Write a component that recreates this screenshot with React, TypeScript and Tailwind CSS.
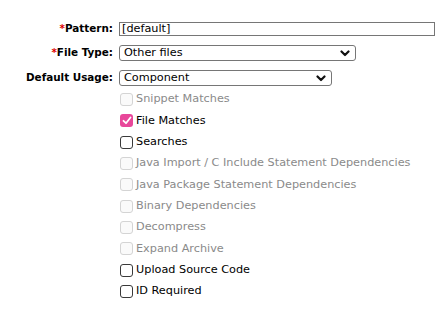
import { ReactNode } from "react";

type Opt = { label: string; checked?: boolean; disabled?: boolean };

const options: Opt[] = [
  { label: "Snippet Matches", disabled: true },
  { label: "File Matches", checked: true },
  { label: "Searches" },
  { label: "Java Import / C Include Statement Dependencies", disabled: true },
  { label: "Java Package Statement Dependencies", disabled: true },
  { label: "Binary Dependencies", disabled: true },
  { label: "Decompress", disabled: true },
  { label: "Expand Archive", disabled: true },
  { label: "Upload Source Code" },
  { label: "ID Required" },
];

const Chevron = () => (
  <svg width="10" height="7" viewBox="0 0 10 7" className="shrink-0">
    <path d="M1.5 1.5 L5 5 L8.5 1.5" fill="none" stroke="#111" strokeWidth="2.2" strokeLinecap="round" strokeLinejoin="round" />
  </svg>
);

const Label = ({ children, required }: { children: ReactNode; required?: boolean }) => (
  <div className="w-[113px] shrink-0 text-right text-[10.4px] font-bold text-black">
    {required && <span className="text-[#e00000]">*</span>}
    {children}
  </div>
);

const Select = ({ value, width }: { value: string; width: string }) => (
  <div className={`${width} flex h-[16px] items-center justify-between rounded-[3px] border border-[#767676] bg-white pl-[4px] pr-[5px]`}>
    <span className="leading-none">{value}</span>
    <Chevron />
  </div>
);

const Box = ({ checked, disabled }: { checked?: boolean; disabled?: boolean }) => {
  if (checked) {
    return (
      <span className="flex h-[13px] w-[13px] items-center justify-center rounded-[3px] bg-[#e8479a]">
        <svg width="10" height="9" viewBox="0 0 10 9">
          <path d="M1.5 4.8 L4 7.2 L8.5 1.5" fill="none" stroke="#fff" strokeWidth="1.8" strokeLinecap="round" strokeLinejoin="round" />
        </svg>
      </span>
    );
  }
  return (
    <span
      className={
        disabled
          ? "h-[13px] w-[13px] rounded-[3px] border border-[#d4d4d4] bg-[#fafafa]"
          : "h-[13px] w-[13px] rounded-[3px] border border-[#3a3a3a] bg-white"
      }
    />
  );
};

export default function App() {
  return (
    <div className="h-[310px] w-[436px] overflow-hidden bg-white pt-[21px] text-[11.25px] text-black" style={{ fontFamily: '"DejaVu Sans", Verdana, sans-serif' }}>
      <div className="flex h-[15px] items-center gap-[6px]">
        <Label required>Pattern:</Label>
        <div className="flex h-[14px] w-[316px] items-center border border-[#767676] pl-[2px]">
          <span className="leading-none">[default]</span>
        </div>
      </div>
      <div className="mt-[9px] flex h-[16px] items-center gap-[6px]">
        <Label required>File Type:</Label>
        <Select value="Other files" width="w-[237px]" />
      </div>
      <div className="mt-[9px] flex h-[16px] items-center gap-[6px]">
        <Label>Default Usage:</Label>
        <Select value="Component" width="w-[213px]" />
      </div>
      <div className="mt-[3px] flex flex-col pl-[120px]">
        {options.map((o) => (
          <div key={o.label} className="flex h-[21.33px] items-center gap-[3px]">
            <Box checked={o.checked} disabled={o.disabled} />
            <span className={o.disabled ? "whitespace-nowrap text-[#8a8a8a]" : "whitespace-nowrap text-black"}>{o.label}</span>
          </div>
        ))}
      </div>
    </div>
  );
}
